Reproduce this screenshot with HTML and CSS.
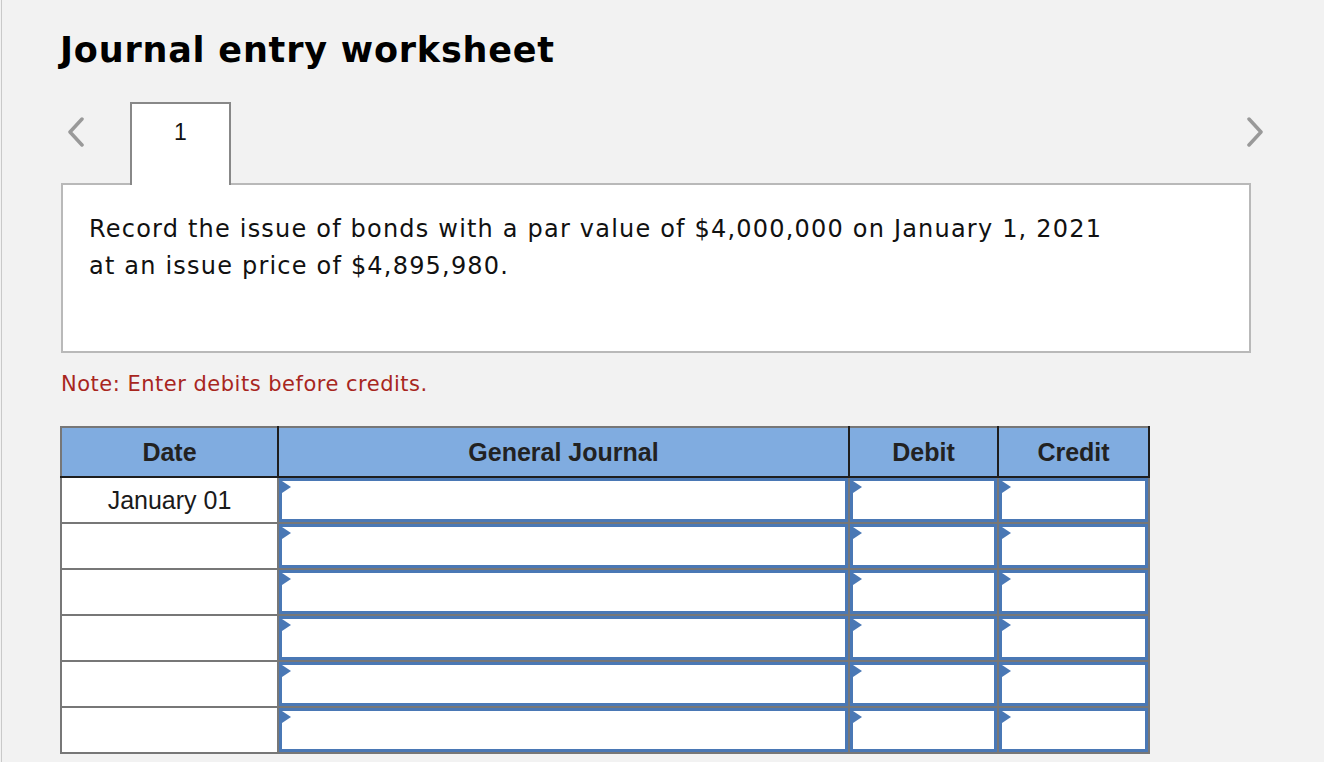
FILE: index.html
```html
<!DOCTYPE html>
<html lang="en">
<head>
    <meta charset="UTF-8">
    <title>Journal entry worksheet</title>
    <link rel="stylesheet" href="styles.css">
</head>
<body>
    <div class="page">
        <h1 class="title">Journal entry worksheet</h1>

        <div class="tab-row">
            <span class="chevron">
                <svg width="22" height="30" viewBox="0 0 22 30"><polyline points="17,2 5,15 17,28" /></svg>
            </span>
            <div class="tab">1</div>
            <span class="spacer"></span>
            <span class="chevron">
                <svg width="22" height="30" viewBox="0 0 22 30"><polyline points="5,2 17,15 5,28" /></svg>
            </span>
        </div>

        <div class="question">
            <p>Record the issue of bonds with a par value of $4,000,000 on January 1, 2021<br>at an issue price of $4,895,980.</p>
        </div>

        <p class="note">Note: Enter debits before credits.</p>

        <table class="journal">
            <thead>
                <tr>
                    <th class="col-date">Date</th>
                    <th class="col-gj">General Journal</th>
                    <th class="col-dr">Debit</th>
                    <th class="col-cr">Credit</th>
                </tr>
            </thead>
            <tbody id="rows"></tbody>
        </table>
    </div>

    <script>
        const rows = document.getElementById('rows');
        for (let i = 0; i < 6; i++) {
            const date = i === 0 ? 'January 01' : '';
            rows.innerHTML += `
                <tr>
                    <td class="date-cell">${date}</td>
                    <td><div class="entry"><input type="text"></div></td>
                    <td><div class="entry"><input type="text"></div></td>
                    <td><div class="entry"><input type="text"></div></td>
                </tr>
            `;
        }
    </script>
</body>
</html>
```

FILE: styles.css
```css
* { margin: 0; padding: 0; box-sizing: border-box; }
html, body { height: 100%; }
body {
    background-color: #f2f2f2;
    font-family: "DejaVu Sans", Verdana, sans-serif;
}
.page {
    min-height: 100%;
    border-left: 1px solid #c9c9c9;
    margin-left: 1px;
    padding: 30px 0 0 58px;
}
.title {
    font-size: 35px;
    font-weight: bold;
    letter-spacing: 0.8px;
    color: #000;
    line-height: 40px;
}
.tab-row {
    display: flex;
    align-items: flex-start;
    width: 1206px;
    margin-top: 32px;
    height: 81px;
}
.chevron {
    margin-top: 15px;
}
.chevron svg polyline {
    fill: none;
    stroke: #999;
    stroke-width: 3.5;
    stroke-linecap: round;
    stroke-linejoin: round;
}
.chevron:first-child {
    margin-left: 5px;
}
.tab {
    position: relative;
    z-index: 1;
    margin-left: 43px;
    width: 101px;
    height: 83px;
    background-color: #fff;
    border: 2px solid #888;
    border-bottom: none;
    font-family: "Liberation Sans", Arial, sans-serif;
    font-size: 23px;
    text-align: center;
    padding-top: 15px;
    color: #111;
}
.spacer { flex: 1; }
.question {
    margin-left: 1px;
    width: 1190px;
    height: 170px;
    background-color: #fff;
    border: 2px solid #b9b9b9;
    padding: 26px 0 0 26px;
}
.question p {
    font-size: 24px;
    letter-spacing: 1.2px;
    line-height: 37px;
    color: #111;
}
.note {
    margin: 16px 0 0 1px;
    font-size: 21px;
    letter-spacing: 0.5px;
    line-height: 30px;
    color: #a8261e;
}
.journal {
    margin-top: 27px;
    border-collapse: collapse;
    font-family: "Liberation Sans", Arial, sans-serif;
    font-size: 25px;
}
.journal th {
    height: 50px;
    background-color: #80ace0;
    color: #222;
    font-weight: bold;
    border: 2px solid #1e1e1e;
    border-top-color: #777;
}
.journal th.col-date { border-left-color: #777; }
.col-date { width: 217px; }
.col-gj { width: 571px; }
.col-dr { width: 149px; }
.col-cr { width: 151px; }
.journal td {
    height: 46px;
    padding: 0;
    background-color: #fff;
    border: 2px solid #777;
}
.date-cell {
    text-align: center;
    color: #1a1a1a;
}
.entry {
    position: relative;
    height: 44px;
}
.entry::before {
    content: "";
    position: absolute;
    left: 3px;
    top: 3px;
    border-left: 9px solid #4a78b5;
    border-top: 6px solid transparent;
    border-bottom: 6px solid transparent;
}
.entry input {
    display: block;
    width: 100%;
    height: 44px;
    border: 3px solid #4a78b5;
    background: #fff;
    outline: none;
}
```
